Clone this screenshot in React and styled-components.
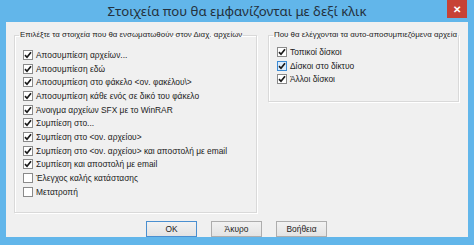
import { createGlobalStyle, styled } from 'styled-components';

const GlobalStyle = createGlobalStyle`
  html, body {
    margin: 0;
    padding: 0;
    background: #62b6ea;
  }
  body {
    font-family: 'Liberation Sans', Arial, sans-serif;
  }
`;

const Frame = styled.div`
  width: 474px;
  height: 245px;
  background: #62b6ea;
  display: flex;
  flex-direction: column;
  box-sizing: border-box;
  padding: 0 6px 8px 6px;
`;

const TitleBar = styled.div`
  height: 22px;
  display: flex;
  align-items: center;
  justify-content: center;
  position: relative;
  font-family: 'Noto Sans', sans-serif;
  font-size: 13.2px;
  color: #24313d;
`;

const CloseButton = styled.div`
  position: absolute;
  right: 1px;
  top: 0;
  width: 20px;
  height: 18px;
  background: #c74236;
  color: #fff;
  font-size: 10px;
  font-weight: bold;
  display: flex;
  align-items: center;
  justify-content: center;
`;

const Body = styled.div`
  flex: 1;
  background: #f0f0f0;
  display: flex;
  flex-direction: column;
  padding: 7px 9px 0 8px;
  box-sizing: border-box;
`;

const Columns = styled.div`
  display: flex;
  align-items: flex-start;
  gap: 11px;
`;

const Group = styled.fieldset`
  margin: 0;
  width: ${p => p.$width}px;
  min-width: 0;
  box-sizing: border-box;
  border: 1px solid #d9d9d9;
  box-shadow: inset 1px 1px 0 #fff, 1px 1px 0 #fff;
  padding: ${p => p.$top}px 0 ${p => p.$bottom}px 8px;
  display: flex;
  flex-direction: column;
`;

const Legend = styled.legend`
  font-size: 7.9px;
  color: #222;
  padding: 0 1px;
  margin-left: -4px;
  line-height: 12px;
  white-space: nowrap;
`;

const Row = styled.label`
  display: flex;
  align-items: center;
  height: 13.7px;
  font-size: 8.4px;
  color: #222;
  gap: 3px;
  white-space: nowrap;
`;

const Box = styled.span`
  width: 10px;
  height: 10px;
  box-sizing: border-box;
  border: 1px solid ${p => (p.$hover ? '#3c8bd5' : '#8a8a8a')};
  background: ${p => (p.$hover ? '#dcecfc' : '#fff')};
  display: flex;
  align-items: center;
  justify-content: center;
`;

const Buttons = styled.div`
  display: flex;
  justify-content: center;
  gap: 14px;
  margin-top: 8px;
`;

const Button = styled.div`
  width: 51px;
  height: 16px;
  box-sizing: border-box;
  border: 1px solid ${p => (p.$default ? '#4a8fd0' : '#adadad')};
  background: linear-gradient(#f2f2f2, #e3e3e3);
  font-size: 8.4px;
  color: #222;
  display: flex;
  align-items: center;
  justify-content: center;
`;

function Check({ checked, hover, children }) {
  return (
    <Row>
      <Box $hover={hover}>
        {checked && (
          <svg width="8" height="8" viewBox="0 0 8 8">
            <path d="M1 4.2 L3 6.3 L7 1.3" fill="none" stroke="#1a1a1a" strokeWidth="1.7" />
          </svg>
        )}
      </Box>
      {children}
    </Row>
  );
}

const leftItems = [
  ['Αποσυμπίεση αρχείων...', true],
  ['Αποσυμπίεση εδώ', true],
  ['Αποσυμπίεση στο φάκελο <ον. φακέλου\\>', true],
  ['Αποσυμπίεση κάθε ενός σε δικό του φάκελο', true],
  ['Άνοιγμα αρχείων SFX με το WinRAR', true],
  ['Συμπίεση στο...', true],
  ['Συμπίεση στο <ον. αρχείου>', true],
  ['Συμπίεση στο <ον. αρχείου> και αποστολή με email', true],
  ['Συμπίεση και αποστολή με email', true],
  ['Έλεγχος καλής κατάστασης', false],
  ['Μετατροπή', false],
];

const rightItems = [
  ['Τοπικοί δίσκοι', true, false],
  ['Δίσκοι στο δίκτυο', true, true],
  ['Άλλοι δίσκοι', true, false],
];

export default function App() {
  return (
    <>
      <GlobalStyle />
      <Frame>
        <TitleBar>
          Στοιχεία που θα εμφανίζονται με δεξί κλικ
          <CloseButton>✕</CloseButton>
        </TitleBar>
        <Body>
          <Columns>
            <Group $width={243} $top={7} $bottom={13}>
              <Legend>Επιλέξτε τα στοιχεία που θα ενσωματωθούν στον Διαχ. αρχείων</Legend>
              {leftItems.map(([text, checked]) => (
                <Check key={text} checked={checked}>{text}</Check>
              ))}
            </Group>
            <Group $width={191} $top={4} $bottom={15}>
              <Legend>Που θα ελέγχονται τα αυτο-αποσυμπιεζόμενα αρχεία</Legend>
              {rightItems.map(([text, checked, hover]) => (
                <Check key={text} checked={checked} hover={hover}>{text}</Check>
              ))}
            </Group>
          </Columns>
          <Buttons>
            <Button $default>OK</Button>
            <Button>Άκυρο</Button>
            <Button>Βοήθεια</Button>
          </Buttons>
        </Body>
      </Frame>
    </>
  );
}
